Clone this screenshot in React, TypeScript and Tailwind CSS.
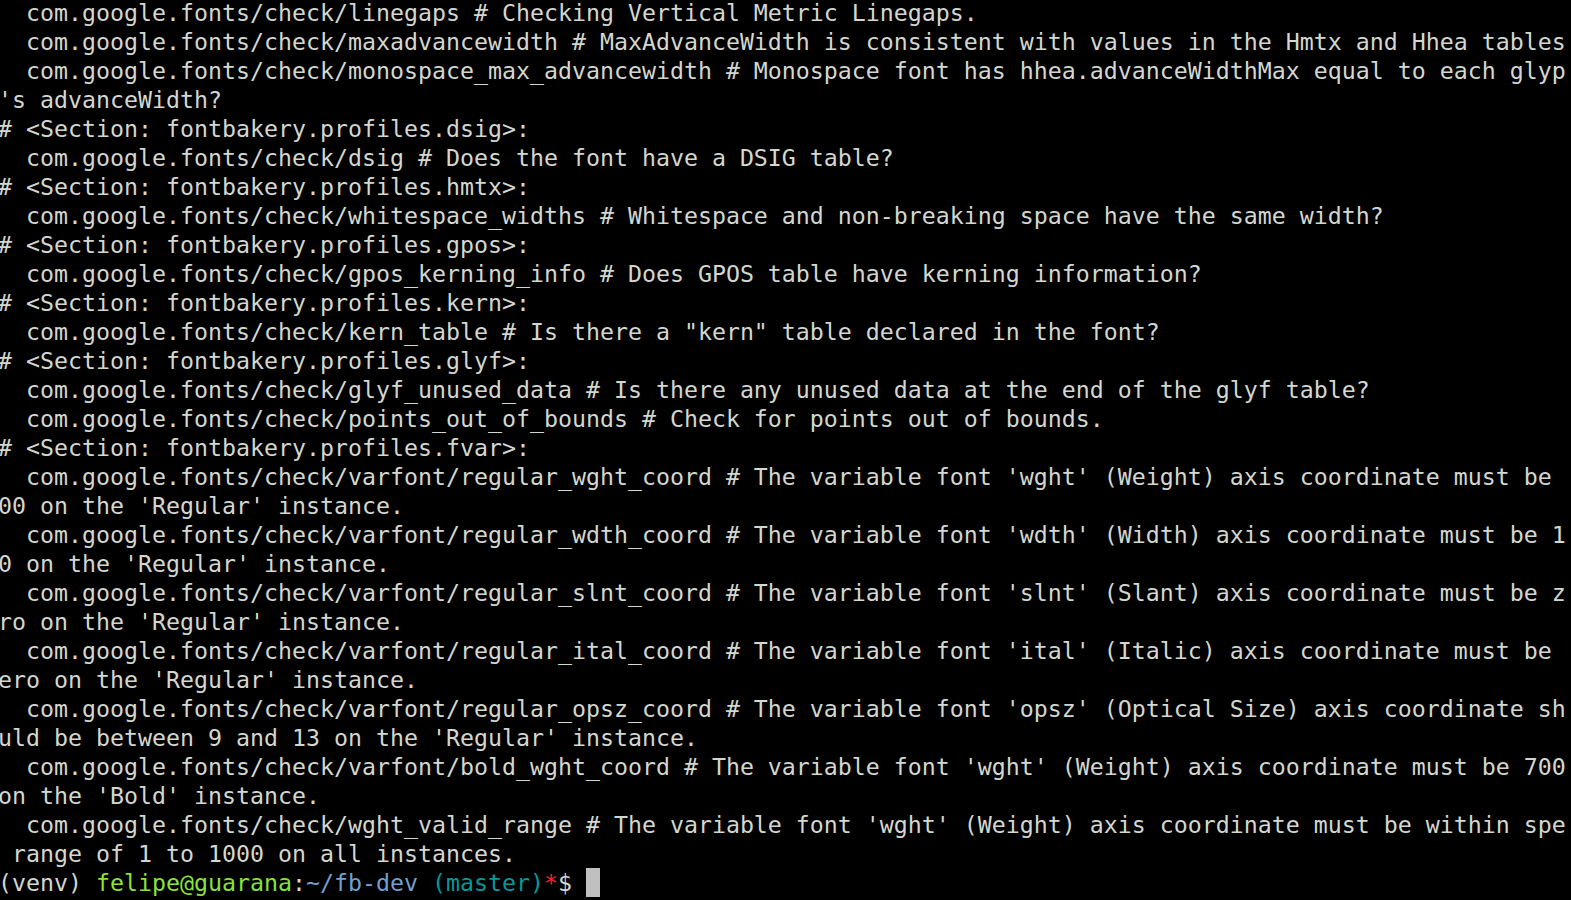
import React from "react";

const lines: string[] = [
  "  com.google.fonts/check/linegaps # Checking Vertical Metric Linegaps.",
  "  com.google.fonts/check/maxadvancewidth # MaxAdvanceWidth is consistent with values in the Hmtx and Hhea tables",
  "  com.google.fonts/check/monospace_max_advancewidth # Monospace font has hhea.advanceWidthMax equal to each glyp",
  "'s advanceWidth?",
  "# <Section: fontbakery.profiles.dsig>:",
  "  com.google.fonts/check/dsig # Does the font have a DSIG table?",
  "# <Section: fontbakery.profiles.hmtx>:",
  "  com.google.fonts/check/whitespace_widths # Whitespace and non-breaking space have the same width?",
  "# <Section: fontbakery.profiles.gpos>:",
  "  com.google.fonts/check/gpos_kerning_info # Does GPOS table have kerning information?",
  "# <Section: fontbakery.profiles.kern>:",
  "  com.google.fonts/check/kern_table # Is there a \"kern\" table declared in the font?",
  "# <Section: fontbakery.profiles.glyf>:",
  "  com.google.fonts/check/glyf_unused_data # Is there any unused data at the end of the glyf table?",
  "  com.google.fonts/check/points_out_of_bounds # Check for points out of bounds.",
  "# <Section: fontbakery.profiles.fvar>:",
  "  com.google.fonts/check/varfont/regular_wght_coord # The variable font 'wght' (Weight) axis coordinate must be ",
  "00 on the 'Regular' instance.",
  "  com.google.fonts/check/varfont/regular_wdth_coord # The variable font 'wdth' (Width) axis coordinate must be 1",
  "0 on the 'Regular' instance.",
  "  com.google.fonts/check/varfont/regular_slnt_coord # The variable font 'slnt' (Slant) axis coordinate must be z",
  "ro on the 'Regular' instance.",
  "  com.google.fonts/check/varfont/regular_ital_coord # The variable font 'ital' (Italic) axis coordinate must be ",
  "ero on the 'Regular' instance.",
  "  com.google.fonts/check/varfont/regular_opsz_coord # The variable font 'opsz' (Optical Size) axis coordinate sh",
  "uld be between 9 and 13 on the 'Regular' instance.",
  "  com.google.fonts/check/varfont/bold_wght_coord # The variable font 'wght' (Weight) axis coordinate must be 700",
  "on the 'Bold' instance.",
  "  com.google.fonts/check/wght_valid_range # The variable font 'wght' (Weight) axis coordinate must be within spe",
  " range of 1 to 1000 on all instances.",
];

export default function App() {
  return (
    <div className="w-[1571px] h-[900px] overflow-hidden bg-black text-[#d3d7cf] font-['DejaVu_Sans_Mono',monospace] text-[23.25px] leading-[29px]">
      <div className="-mt-[2.5px] -ml-[2px]">
        {lines.map((line, i) => (
          <div key={i} className="h-[29px] whitespace-pre">
            {line}
          </div>
        ))}

        {/* prompt */}
        <div className="h-[29px] whitespace-pre flex items-stretch">
          <span>(venv) </span>
          <span className="text-[#8ae234]">felipe@guarana</span>
          <span>:</span>
          <span className="text-[#729fcf]">~/fb-dev</span>
          <span className="text-[#06989a]"> (master)</span>
          <span className="text-[#ef2929]">*</span>
          <span>$ </span>
          <span className="inline-block w-[14px] h-[29px] bg-[#c0c0c0]" />
        </div>
      </div>
    </div>
  );
}
